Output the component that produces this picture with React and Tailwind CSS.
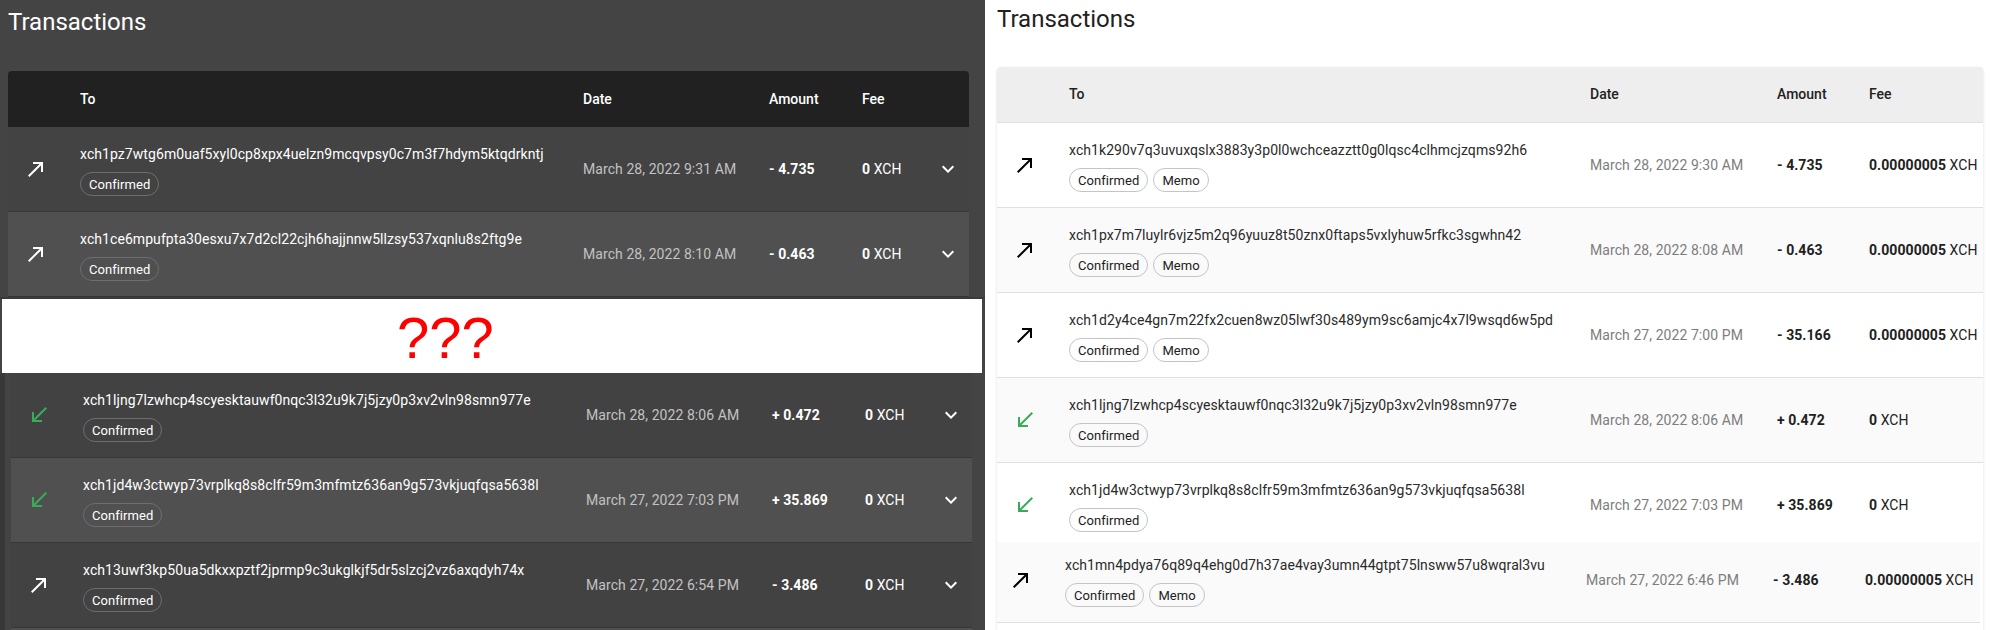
import React from "react";

const UP = "M9 5v2h6.59L4 18.59 5.41 20 17 8.41V15h2V5z";
const DOWN = "M15 19v-2H8.41L20 5.41 18.59 4 7 15.59V9H5v10z";
const CHEV = "M16.59 8.59 12 13.17 7.41 8.59 6 10l6 6 6-6z";

function Icon({ d, className }) {
  return (
    <svg viewBox="0 0 24 24" className={className} fill="currentColor">
      <path d={d} />
    </svg>
  );
}

function Chip({ children, dark }) {
  return (
    <span
      className={
        dark
          ? "inline-flex h-[24px] items-center rounded-full border border-[#6e6e6e] px-[8px] text-[13px] leading-none text-white"
          : "inline-flex h-[24px] items-center rounded-full border border-[#c4c4c4] px-[8px] text-[13px] leading-none text-[#212121]"
      }
    >
      {children}
    </span>
  );
}

const darkTop = [
  {
    dir: "out",
    addr: "xch1pz7wtg6m0uaf5xyl0cp8xpx4uelzn9mcqvpsy0c7m3f7hdym5ktqdrkntj",
    date: "March 28, 2022 9:31 AM",
    amount: "- 4.735",
    bg: "bg-[#434343]",
  },
  {
    dir: "out",
    addr: "xch1ce6mpufpta30esxu7x7d2cl22cjh6hajjnnw5llzsy537xqnlu8s2ftg9e",
    date: "March 28, 2022 8:10 AM",
    amount: "- 0.463",
    bg: "bg-[#505050]",
  },
];

const darkBottom = [
  {
    dir: "in",
    addr: "xch1ljng7lzwhcp4scyesktauwf0nqc3l32u9k7j5jzy0p3xv2vln98smn977e",
    date: "March 28, 2022 8:06 AM",
    amount: "+ 0.472",
    bg: "bg-[#424242]",
  },
  {
    dir: "in",
    addr: "xch1jd4w3ctwyp73vrplkq8s8clfr59m3mfmtz636an9g573vkjuqfqsa5638l",
    date: "March 27, 2022 7:03 PM",
    amount: "+ 35.869",
    bg: "bg-[#505050]",
  },
  {
    dir: "out",
    addr: "xch13uwf3kp50ua5dkxxpztf2jprmp9c3ukglkjf5dr5slzcj2vz6axqdyh74x",
    date: "March 27, 2022 6:54 PM",
    amount: "- 3.486",
    bg: "bg-[#424242]",
  },
];

const light = [
  {
    dir: "out",
    addr: "xch1k290v7q3uvuxqslx3883y3p0l0wchceazztt0g0lqsc4clhmcjzqms92h6",
    date: "March 28, 2022 9:30 AM",
    amount: "- 4.735",
    fee: "0.00000005",
    memo: true,
    bg: "bg-white",
  },
  {
    dir: "out",
    addr: "xch1px7m7luylr6vjz5m2q96yuuz8t50znx0ftaps5vxlyhuw5rfkc3sgwhn42",
    date: "March 28, 2022 8:08 AM",
    amount: "- 0.463",
    fee: "0.00000005",
    memo: true,
    bg: "bg-[#fafafa]",
  },
  {
    dir: "out",
    addr: "xch1d2y4ce4gn7m22fx2cuen8wz05lwf30s489ym9sc6amjc4x7l9wsqd6w5pd",
    date: "March 27, 2022 7:00 PM",
    amount: "- 35.166",
    fee: "0.00000005",
    memo: true,
    bg: "bg-white",
  },
  {
    dir: "in",
    addr: "xch1ljng7lzwhcp4scyesktauwf0nqc3l32u9k7j5jzy0p3xv2vln98smn977e",
    date: "March 28, 2022 8:06 AM",
    amount: "+ 0.472",
    fee: "0",
    memo: false,
    bg: "bg-[#fafafa]",
  },
];

const light5 = {
  dir: "in",
  addr: "xch1jd4w3ctwyp73vrplkq8s8clfr59m3mfmtz636an9g573vkjuqfqsa5638l",
  date: "March 27, 2022 7:03 PM",
  amount: "+ 35.869",
  fee: "0",
  memo: false,
  bg: "bg-white",
};

const light6 = {
  dir: "out",
  addr: "xch1mn4pdya76q89q4ehg0d7h37ae4vay3umn44gtpt75lnsww57u8wqral3vu",
  date: "March 27, 2022 6:46 PM",
  amount: "- 3.486",
  fee: "0.00000005",
  memo: true,
  bg: "bg-[#fafafa]",
};

function DarkRow({ tx }) {
  return (
    <div
      className={`grid h-[85px] shrink-0 grid-cols-[56px_503px_186px_93px_81px_42px] items-center border-b border-[#363636] tracking-[0.07px] ${tx.bg}`}
    >
      <div className="flex justify-center">
        {tx.dir === "out" ? (
          <Icon d={UP} className="h-6 w-6 text-white" />
        ) : (
          <Icon d={DOWN} className="h-6 w-6 text-[#3aac59]" />
        )}
      </div>
      <div className="flex flex-col pl-4 pt-[2px]">
        <div className="whitespace-nowrap text-[14px] leading-[20px] text-white">{tx.addr}</div>
        <div className="mt-[8px] flex gap-[5px]">
          <Chip dark>Confirmed</Chip>
        </div>
      </div>
      <div className="whitespace-nowrap pl-4 text-[14px] text-[#c2c2c2]">{tx.date}</div>
      <div className="whitespace-nowrap pl-4 text-[14px] font-bold text-white">{tx.amount}</div>
      <div className="whitespace-nowrap pl-4 text-[14px] text-white">
        <span className="font-bold">0</span> XCH
      </div>
      <div className="flex justify-center">
        <Icon d={CHEV} className="h-6 w-6 text-white" />
      </div>
    </div>
  );
}

function LightRow({ tx }) {
  return (
    <div
      className={`grid h-[85px] shrink-0 grid-cols-[56px_521px_187px_92px_1fr] items-center border-b border-[#e0e0e0] tracking-[0.07px] ${tx.bg}`}
    >
      <div className="flex justify-center">
        {tx.dir === "out" ? (
          <Icon d={UP} className="h-6 w-6 text-black" />
        ) : (
          <Icon d={DOWN} className="h-6 w-6 text-[#3aac59]" />
        )}
      </div>
      <div className="flex flex-col pl-4 pt-[2px]">
        <div className="whitespace-nowrap text-[14px] leading-[20px] text-[#2a2a2a]">{tx.addr}</div>
        <div className="mt-[8px] flex gap-[5px]">
          <Chip>Confirmed</Chip>
          {tx.memo && <Chip>Memo</Chip>}
        </div>
      </div>
      <div className="whitespace-nowrap pl-4 text-[14px] text-[#7d7d7d]">{tx.date}</div>
      <div className="whitespace-nowrap pl-4 text-[14px] font-bold text-[#212121]">{tx.amount}</div>
      <div className="whitespace-nowrap pl-4 text-[14px] text-[#212121]">
        <span className="font-bold">{tx.fee}</span> XCH
      </div>
    </div>
  );
}

export default function App() {
  return (
    <div className="flex h-[630px] w-[1996px] overflow-hidden bg-white font-[family-name:Roboto,sans-serif]">
      {/* Dark panel */}
      <div className="flex h-[630px] w-[985px] shrink-0 flex-col overflow-hidden bg-[#444444]">
        <div className="h-[71px] shrink-0 pl-[8px] pt-[6px]">
          <h1 className="text-[24px] leading-[32px] text-white">Transactions</h1>
        </div>
        <div className="mx-[8px] w-[961px] shrink-0">
          <div className="grid h-[56px] grid-cols-[56px_503px_186px_93px_81px_42px] items-center rounded-t-[4px] bg-[#212121] text-[14px] font-medium text-white">
            <div />
            <div className="pl-4">To</div>
            <div className="pl-4">Date</div>
            <div className="pl-4">Amount</div>
            <div className="pl-4">Fee</div>
            <div />
          </div>
          {darkTop.map((tx) => (
            <DarkRow key={tx.addr} tx={tx} />
          ))}
        </div>
        <div className="h-[2px] shrink-0 bg-[#3a3a3a]" />
        <div className="ml-[2px] h-[74px] w-[980px] shrink-0 bg-white pl-[395px] pt-[10px]">
          <span className="font-[family-name:'Liberation_Sans',Arial,sans-serif] text-[58px] leading-none text-[#ff0000]">
            ???
          </span>
        </div>
        <div className="flex shrink-0">
          <div className="w-[5px] bg-[#383838]" />
          <div className="ml-[6px] w-[961px]">
            {darkBottom.map((tx) => (
              <DarkRow key={tx.addr} tx={tx} />
            ))}
            <div className="h-[85px] bg-[#505050]" />
          </div>
        </div>
      </div>

      {/* Light panel */}
      <div className="flex flex-1 flex-col bg-white pl-[12px]">
        <div className="h-[67px] shrink-0 pt-[3px]">
          <h1 className="text-[24px] leading-[32px] text-[#212121]">Transactions</h1>
        </div>
        <div className="w-[986px] shrink-0 overflow-hidden rounded-t-[4px] shadow-[0_1px_3px_rgba(0,0,0,0.14)]">
          <div className="grid h-[56px] grid-cols-[56px_521px_187px_92px_1fr] items-center border-b border-[#e0e0e0] bg-[#eeeeee] text-[14px] font-medium text-[#212121]">
            <div />
            <div className="pl-4">To</div>
            <div className="pl-4">Date</div>
            <div className="pl-4">Amount</div>
            <div className="pl-4">Fee</div>
          </div>
          {light.map((tx) => (
            <LightRow key={tx.addr} tx={tx} />
          ))}
          <div className="h-[79px] overflow-hidden">
            <LightRow tx={light5} />
          </div>
          <div className="-ml-[4px] h-[81px] w-[987px] overflow-hidden">
            <div className="-mt-[4px]">
              <LightRow tx={light6} />
            </div>
          </div>
          <div className="h-[20px] bg-white" />
        </div>
      </div>
    </div>
  );
}
